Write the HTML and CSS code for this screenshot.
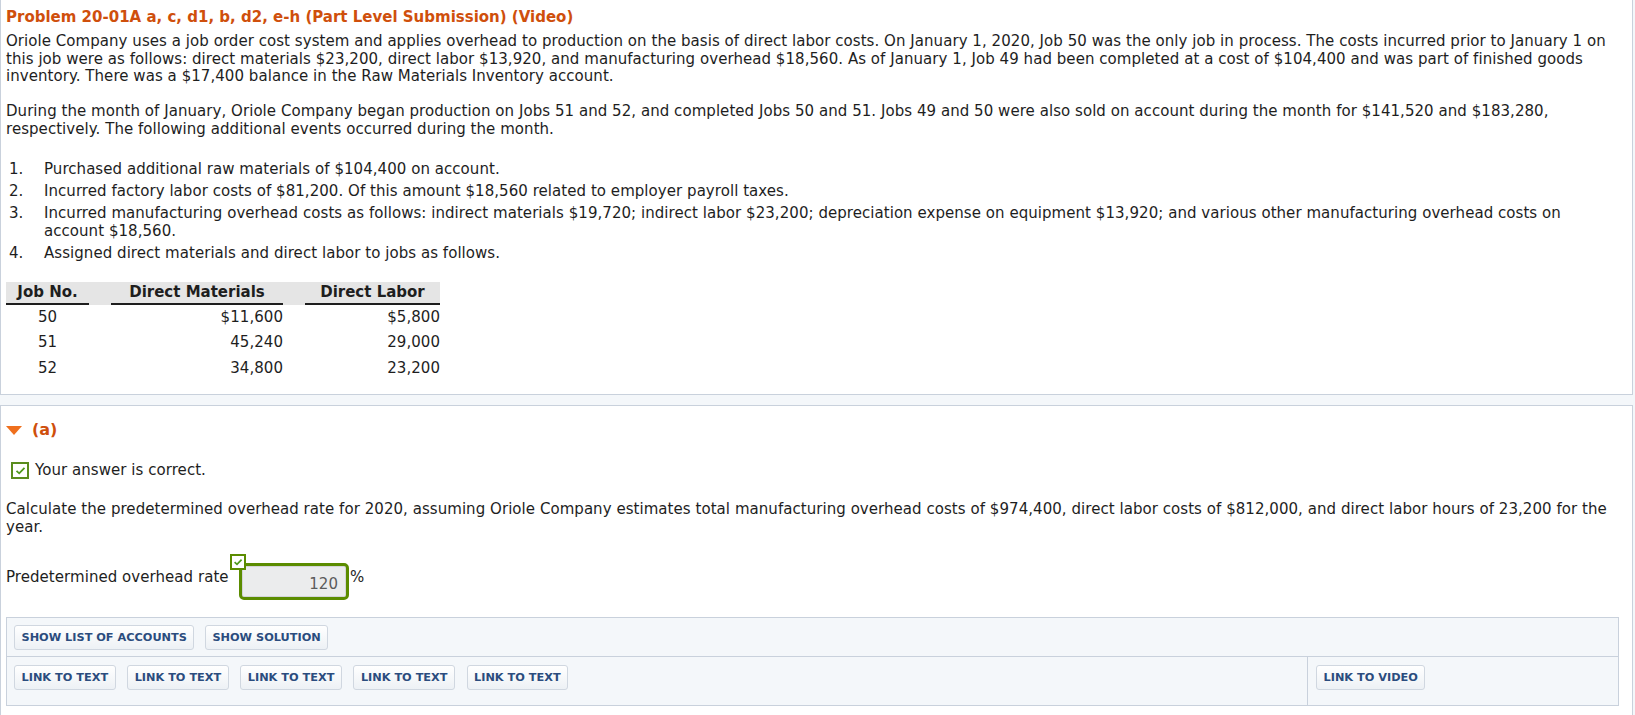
FILE: index.html
```html
<!DOCTYPE html>
<html lang="en">
<head>
<meta charset="utf-8">
<title>Problem 20-01A</title>
<link rel="stylesheet" href="styles.css">
</head>
<body>
<div class="page">
  <section class="card card-problem">
    <h1 class="title">Problem 20-01A a, c, d1, b, d2, e-h (Part Level Submission) (Video)</h1>
    <p class="para">Oriole Company uses a job order cost system and applies overhead to production on the basis of direct labor costs. On January 1, 2020, Job 50 was the only job in process. The costs incurred prior to January 1 on this job were as follows: direct materials $23,200, direct labor $13,920, and manufacturing overhead $18,560. As of January 1, Job 49 had been completed at a cost of $104,400 and was part of finished goods inventory. There was a $17,400 balance in the Raw Materials Inventory account.</p>
    <p class="para para-2">During the month of January, Oriole Company began production on Jobs 51 and 52, and completed Jobs 50 and 51. Jobs 49 and 50 were also sold on account during the month for $141,520 and $183,280, respectively. The following additional events occurred during the month.</p>
    <ol class="events">
      <li class="event"><span class="event-num">1.</span><span class="event-text">Purchased additional raw materials of $104,400 on account.</span></li>
      <li class="event"><span class="event-num">2.</span><span class="event-text">Incurred factory labor costs of $81,200. Of this amount $18,560 related to employer payroll taxes.</span></li>
      <li class="event"><span class="event-num">3.</span><span class="event-text">Incurred manufacturing overhead costs as follows: indirect materials $19,720; indirect labor $23,200; depreciation expense on equipment $13,920; and various other manufacturing overhead costs on account $18,560.</span></li>
      <li class="event"><span class="event-num">4.</span><span class="event-text">Assigned direct materials and direct labor to jobs as follows.</span></li>
    </ol>
    <table class="jobs">
      <thead>
        <tr>
          <th class="col-job"><span class="hd">Job No.</span></th>
          <th class="col-dm"><span class="hd">Direct Materials</span></th>
          <th class="col-dl"><span class="hd">Direct Labor</span></th>
        </tr>
      </thead>
      <tbody>
        <tr><td class="col-job">50</td><td class="col-dm">$11,600</td><td class="col-dl">$5,800</td></tr>
        <tr><td class="col-job">51</td><td class="col-dm">45,240</td><td class="col-dl">29,000</td></tr>
        <tr><td class="col-job">52</td><td class="col-dm">34,800</td><td class="col-dl">23,200</td></tr>
      </tbody>
    </table>
  </section>

  <section class="card card-part">
    <div class="part-head"><span class="tri"></span><span class="part-label">(a)</span></div>
    <div class="status">
      <span class="check-box"><svg viewBox="0 0 13 13" width="13" height="13"><path d="M2.5 6.8 L5.2 9.3 L10.5 3.8" fill="none" stroke="#4f9a1c" stroke-width="1.8"/></svg></span>
      <span class="status-text">Your answer is correct.</span>
    </div>
    <p class="para question">Calculate the predetermined overhead rate for 2020, assuming Oriole Company estimates total manufacturing overhead costs of $974,400, direct labor costs of $812,000, and direct labor hours of 23,200 for the year.</p>
    <div class="answer-row">
      <span class="answer-label">Predetermined overhead rate</span>
      <span class="answer-field">
        <span class="badge"><svg viewBox="0 0 12 12" width="12" height="12"><path d="M2.6 6.2 L5 8.4 L9.6 3.6" fill="none" stroke="#4f9a1c" stroke-width="1.7"/></svg></span>
        <span class="answer-input">120</span>
      </span>
      <span class="answer-unit">%</span>
    </div>
    <div class="panel">
      <div class="panel-top">
        <button class="btn">Show List of Accounts</button>
        <button class="btn">Show Solution</button>
      </div>
      <div class="panel-bottom">
        <div class="links">
          <button class="btn">Link to Text</button>
          <button class="btn">Link to Text</button>
          <button class="btn">Link to Text</button>
          <button class="btn">Link to Text</button>
          <button class="btn">Link to Text</button>
        </div>
        <div class="video">
          <button class="btn">Link to Video</button>
        </div>
      </div>
    </div>
  </section>
</div>
</body>
</html>
```

FILE: styles.css
```css
* { box-sizing: border-box; }

html, body {
  margin: 0;
  padding: 0;
}

body {
  background: #f4f7fa;
  font-family: "DejaVu Sans", Verdana, sans-serif;
  font-size: 15px;
  line-height: 17.5px;
  letter-spacing: 0.05px;
  color: #1e1e1e;
}

.page {
  width: 1633px;
  display: flex;
  flex-direction: column;
  gap: 10px;
}

.card {
  background: #ffffff;
  border: 1px solid #c9d1dc;
}

.card-problem {
  border-top: none;
  padding: 9px 13px 13px 5px;
}

.title {
  margin: 0;
  font-size: 15px;
  line-height: 17.5px;
  font-weight: bold;
  letter-spacing: 0;
  color: #cf4f0c;
}

.para {
  margin: 6.5px 0 0;
}

.para-2 {
  margin-top: 17.5px;
}

.events {
  list-style: none;
  margin: 23px 0 0;
  padding: 0;
  display: flex;
  flex-direction: column;
  gap: 4.5px;
}

.event {
  display: flex;
}

.event-num {
  width: 38px;
  flex: none;
  padding-left: 3px;
}

.event-text {
  flex: 1;
}

.jobs {
  margin-top: 19.5px;
  border-collapse: collapse;
  border-spacing: 0;
}

.jobs th {
  background: #e5e5e5;
  padding: 0;
  font-weight: bold;
  letter-spacing: 0;
  text-align: center;
  height: 23px;
  vertical-align: bottom;
}

.jobs .hd {
  display: block;
  border-bottom: 2px solid #1e1e1e;
  padding-bottom: 1px;
}

.jobs th.col-dm, .jobs th.col-dl {
  padding-left: 22px;
}

.jobs .col-job { width: 83px; }
.jobs .col-dm { width: 194px; }
.jobs .col-dl { width: 157px; }

.jobs td {
  height: 25.5px;
  padding: 0;
}

.jobs td.col-job { text-align: center; }
.jobs td.col-dm, .jobs td.col-dl { text-align: right; }

.card-part {
  padding: 15.5px 13px 20px 5px;
}

.part-head {
  display: flex;
  align-items: center;
  gap: 10px;
  height: 17px;
  font-size: 16px;
  font-weight: bold;
  letter-spacing: 0;
  color: #cf4f0c;
}

.tri {
  width: 0;
  height: 0;
  border-left: 8.5px solid transparent;
  border-right: 8.5px solid transparent;
  border-top: 9px solid #ef6f1d;
  margin-top: 1px;
}

.status {
  margin-top: 23px;
  display: flex;
  align-items: center;
  gap: 6px;
  padding-left: 5px;
}

.check-box {
  width: 18px;
  height: 17px;
  border: 2px solid #5a8c1e;
  display: flex;
  align-items: center;
  justify-content: center;
  background: #fff;
}

.check-box svg, .badge svg { display: block; }

.question {
  margin-top: 22px;
}

.answer-row {
  margin-top: 27px;
  display: flex;
  align-items: flex-start;
}

.answer-label {
  margin-top: 5.5px;
  width: 233px;
  flex: none;
}

.answer-field {
  position: relative;
  width: 110px;
  height: 37px;
  flex: none;
}

.badge {
  position: absolute;
  left: -9px;
  top: -9px;
  width: 16px;
  height: 16px;
  border: 2px solid #5b8c00;
  background: #fff;
  display: flex;
  align-items: center;
  justify-content: center;
  z-index: 1;
}

.answer-input {
  display: block;
  height: 37px;
  border: 3px solid #5b8c00;
  border-radius: 5px;
  background: #ebeced;
  box-shadow: inset 0 0 0 1px #d3d5d8;
  text-align: right;
  padding: 10px 8px 0 0;
  font-size: 15px;
  line-height: 17px;
  color: #5b5b5b;
}

.answer-unit {
  margin-top: 5.5px;
  padding-left: 1px;
}

.panel {
  margin-top: 17px;
  border: 1px solid #c9d1dc;
  background: #f4f7fa;
}

.panel-top {
  display: flex;
  gap: 10.5px;
  padding: 6.5px 7px 6.5px;
  border-bottom: 1px solid #c9d1dc;
}

.panel-bottom {
  display: flex;
  height: 48px;
}

.links {
  width: 1301px;
  display: flex;
  gap: 11.5px;
  padding: 7.5px 7px 0;
  border-right: 1px solid #c9d1dc;
  align-items: flex-start;
}

.video {
  padding: 7.5px 8px 0;
}

.btn {
  display: inline-flex;
  align-items: center;
  height: 25px;
  padding: 0 6.5px;
  border: 1px solid #d0d7e0;
  border-radius: 3px;
  background: linear-gradient(#ffffff, #edf1f5);
  font-family: "DejaVu Sans", Verdana, sans-serif;
  font-size: 11.3px;
  font-weight: bold;
  letter-spacing: 0;
  text-transform: uppercase;
  color: #2b4c7e;
  cursor: pointer;
}
```
